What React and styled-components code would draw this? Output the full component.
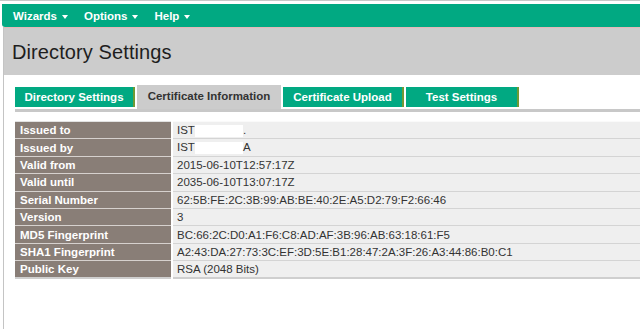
import React from 'react';
import styled, { createGlobalStyle } from 'styled-components';

const Global = createGlobalStyle`
  html, body { margin: 0; padding: 0; background: #fff; }
  body { font-family: Arial, "Liberation Sans", sans-serif; overflow: hidden; }
`

const Page = styled.div`
  width: 640px;
  height: 329px;
  overflow: hidden;
  border-top: 1px solid #c8c8c8;
  box-sizing: border-box;
`
const Frame = styled.div`
  margin-left: 2px;
  height: 100%;
`
const TopNav = styled.div`
  display: flex;
  align-items: center;
  height: 23px;
  margin-top: 3px;
  background: #01a982;
  border-bottom-left-radius: 3px;
  padding-left: 11px;
`
const NavItem = styled.span`
  display: flex;
  align-items: center;
  gap: 5px;
  color: #fff;
  font-weight: bold;
  font-size: 11.5px;
  margin-right: ${p => p.$gap}px;
`
const Caret = styled.span`
  width: 0;
  height: 0;
  border-left: 3.5px solid transparent;
  border-right: 3.5px solid transparent;
  border-top: 4px solid #fff;
  margin-top: 2px;
`
const Body = styled.div`
  margin-left: 1px;
  border-left: 1px solid #c4c4c4;
  height: 100%;
`
const Header = styled.div`
  background: #cccccc;
  height: 48px;
  border-top: 1px solid #e6b8b8;
  display: flex;
  align-items: center;
  padding-left: 8px;
  padding-top: 2px;
  box-sizing: border-box;
`
const Title = styled.h1`
  margin: 0;
  font-weight: normal;
  font-size: 20px;
  color: #1e1e1e;
  letter-spacing: 0.1px;
`
const Content = styled.div`
  padding: 9px 0 0 11px;
`
const Tabs = styled.div`
  display: flex;
  align-items: flex-end;
  height: 25px;
  border-bottom: 3px solid #c8c8c8;
`
const Tab = styled.div`
  display: flex;
  align-items: center;
  justify-content: center;
  box-sizing: border-box;
  width: ${p => p.$w}px;
  margin-right: 2px;
  font-size: 11.5px;
  font-weight: bold;
  height: ${p => (p.$active ? 24 : 20)}px;
  margin-bottom: ${p => (p.$active ? 0 : 2)}px;
  background: ${p => (p.$active ? '#cccccc' : '#01a982')};
  color: ${p => (p.$active ? '#333' : '#fff')};
  border-right: ${p => (p.$active ? 'none' : '2px solid #6f9a35')};
  padding-bottom: ${p => (p.$active ? 3 : 0)}px;
`
const Table = styled.table`
  margin-top: 9px;
  border-collapse: collapse;
  width: 640px;
  border-top: 1px solid #e2e2e2;
  border-bottom: 2px solid #cfcfcf;
  font-size: 11.5px;
`
const Row = styled.tr`
  height: 17.4px;
`
const Label = styled.td`
  background: #897e77;
  color: #fff;
  font-weight: bold;
  width: 151px;
  padding: 0 0 0 5px;
  border-bottom: 1px solid #d6d1ce;
  border-right: 2px solid #fff;
`
const Value = styled.td`
  background: #efefef;
  color: #333;
  padding: 0 0 0 4px;
  border-bottom: 1px solid #d4d4d4;
  border-top: 1px solid #fafafa;
`
const Redact = styled.span`
  display: inline-block;
  width: 48px;
  height: 12px;
  background: #fff;
  vertical-align: middle;
`

const rows = [
  ['Issued to', <>IST<Redact />.</>],
  ['Issued by', <>IST<Redact />A</>],
  ['Valid from', '2015-06-10T12:57:17Z'],
  ['Valid until', '2035-06-10T13:07:17Z'],
  ['Serial Number', '62:5B:FE:2C:3B:99:AB:BE:40:2E:A5:D2:79:F2:66:46'],
  ['Version', '3'],
  ['MD5 Fingerprint', 'BC:66:2C:D0:A1:F6:C8:AD:AF:3B:96:AB:63:18:61:F5'],
  ['SHA1 Fingerprint', 'A2:43:DA:27:73:3C:EF:3D:5E:B1:28:47:2A:3F:26:A3:44:86:B0:C1'],
  ['Public Key', 'RSA (2048 Bits)'],
]

export default function App() {
  return (
    <Page>
      <Global />
      <Frame>
        <TopNav>
          <NavItem $gap={16}>Wizards<Caret /></NavItem>
          <NavItem $gap={16}>Options<Caret /></NavItem>
          <NavItem $gap={0}>Help<Caret /></NavItem>
        </TopNav>
        <Body>
          <Header>
            <Title>Directory Settings</Title>
          </Header>
          <Content>
            <Tabs>
              <Tab $w={120}>Directory Settings</Tab>
              <Tab $w={144} $active>Certificate Information</Tab>
              <Tab $w={121}>Certificate Upload</Tab>
              <Tab $w={113}>Test Settings</Tab>
            </Tabs>
            <Table>
              <tbody>
                {rows.map(([k, v]) => (
                  <Row key={k}>
                    <Label>{k}</Label>
                    <Value>{v}</Value>
                  </Row>
                ))}
              </tbody>
            </Table>
          </Content>
        </Body>
      </Frame>
    </Page>
  );
}
